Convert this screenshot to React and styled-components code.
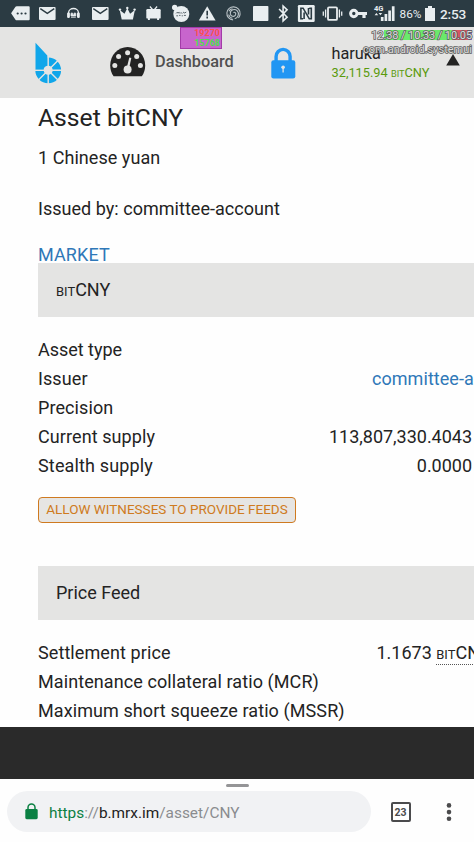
import styled, { createGlobalStyle } from 'styled-components'

const colors = {
  status: '#2b3b43',
  statusIcon: '#e9eef0',
  panel: '#e4e4e3',
  text: '#232323',
  link: '#2f78b8',
  green: '#5a9a0c',
  orange: '#cf7a20',
  secure: '#0b8043',
}

const App = () => (
  <Screen>
    <GlobalStyle />
    <StatusBar>
      {statusIcons.map(({ name, width, draw }) => (
        <StatusCell key={name} $width={width}>
          <svg width={width} height="27" viewBox={`${-width / 2} 0 ${width} 27`}>
            {draw}
          </svg>
        </StatusCell>
      ))}
      <Battery>86%</Battery>
      <svg width="10" height="27" viewBox="0 0 10 27">
        <path d="M0 8h3V6h4v2h3v13H0z" fill={colors.statusIcon} />
      </svg>
      <Clock>2:53</Clock>
    </StatusBar>

    <Header>
      <Logo />
      <Gauge />
      <NavLabel>Dashboard</NavLabel>
      <Padlock />
      <Account>
        <UserName>haruka</UserName>
        <Balance>
          32,115.94 <Small>BIT</Small>CNY
        </Balance>
      </Account>
      <Caret width="14" height="12" viewBox="0 0 14 12">
        <path d="M7 0l6.8 11.5H.2z" fill={colors.text} />
      </Caret>
      <Traffic>
        <TrafficLine $color="#ff5050">19270</TrafficLine>
        <TrafficLine $color="#4be04b">15768</TrafficLine>
      </Traffic>
      <Load>
        <LoadLine $bar>12.38 / 10.33 / 10.05</LoadLine>
        <LoadLine>com.android.systemui</LoadLine>
      </Load>
    </Header>

    <Content>
      <Title>Asset bitCNY</Title>
      <Description>1 Chinese yuan</Description>
      <IssuedBy>Issued by: committee-account</IssuedBy>
      <MarketLink>MARKET</MarketLink>
      <PanelTitle>
        <Small>BIT</Small>CNY
      </PanelTitle>
      <Table>
        <Row>
          <Label $spacing={-0.03}>Asset type</Label>
        </Row>
        <Row>
          <Label>Issuer</Label>
          <IssuerLink>committee-account</IssuerLink>
        </Row>
        <Row>
          <Label>Precision</Label>
        </Row>
        <Row>
          <Label>Current supply</Label>
          <Value>113,807,330.4043</Value>
        </Row>
        <Row>
          <Label $spacing={0.15}>Stealth supply</Label>
          <Value>0.0000</Value>
        </Row>
      </Table>
      <FeedButton>ALLOW WITNESSES TO PROVIDE FEEDS</FeedButton>
      <PanelTitle>Price Feed</PanelTitle>
      <Table>
        <Row>
          <Label>Settlement price</Label>
          <Price>
            1.1673{' '}
            <Unit>
              <Small>BIT</Small>CNY
            </Unit>
          </Price>
        </Row>
        <Row>
          <Label>Maintenance collateral ratio (MCR)</Label>
        </Row>
        <Row>
          <Label>Maximum short squeeze ratio (MSSR)</Label>
        </Row>
      </Table>
    </Content>

    <PageFooter />

    <BrowserBar>
      <Handle />
      <Toolbar>
        <Address>
          <svg width="13" height="17" viewBox="0 0 13 17">
            <path
              d="M3 7V4.6a3.5 3.5 0 0 1 7 0V7"
              fill="none"
              stroke={colors.secure}
              strokeWidth="1.5"
            />
            <rect x=".3" y="6" width="12.4" height="10.2" rx="1.4" fill={colors.secure} />
          </svg>
          <Url>
            <Scheme>https</Scheme>://<Host>b.mrx.im</Host>/asset/CNY
          </Url>
        </Address>
        <Tabs>23</Tabs>
        <svg width="6" height="20" viewBox="0 0 6 20" fill="#4b4b4d">
          <circle cx="3" cy="3.4" r="2.3" />
          <circle cx="3" cy="10.1" r="2.3" />
          <circle cx="3" cy="16.8" r="2.3" />
        </svg>
      </Toolbar>
    </BrowserBar>
  </Screen>
)

const mail = (
  <>
    <rect x="-8.3" y="7" width="16.6" height="13" rx="1" fill={colors.statusIcon} />
    <path d="M-7 8.7L0 13.4 7 8.7" fill="none" stroke={colors.status} strokeWidth="1.4" />
  </>
)

// every icon is drawn round x = 0 of its own cell
const statusIcons = [
  {
    name: 'more',
    width: 26.6,
    draw: (
      <>
        <path
          d="M-3.6 6.2H8.4a1 1 0 0 1 1 1V19.3a1 1 0 0 1-1 1H-3.6a1.5 1.5 0 0 1-1.2-.6L-9.2 13.3-4.8 6.8a1.5 1.5 0 0 1 1.2-.6z"
          fill={colors.statusIcon}
        />
        <g fill={colors.status}>
          <circle cx="-2.6" cy="13.5" r="1.1" />
          <circle cx="1.3" cy="13.5" r="1.1" />
          <circle cx="5.2" cy="13.5" r="1.1" />
        </g>
      </>
    ),
  },
  { name: 'mail', width: 26.6, draw: mail },
  {
    name: 'headset',
    width: 26.8,
    draw: (
      <>
        <path
          d="M-4.8 14V12.5a4.9 4 0 0 1 9.8 0V14"
          fill="none"
          stroke={colors.statusIcon}
          strokeWidth="1.3"
        />
        <rect x="-6.3" y="12.5" width="2.8" height="5.5" rx="1.2" fill={colors.statusIcon} />
        <rect x="3.6" y="12.5" width="2.8" height="5.5" rx="1.2" fill={colors.statusIcon} />
        <path
          d="M-2.4 16v-2.2a.9.9 0 0 1 1.8 0v1.2h1.2v-1.2a.9.9 0 0 1 1.8 0V16zM-2.4 17.3h4.8"
          fill={colors.statusIcon}
          stroke={colors.statusIcon}
          strokeWidth=".8"
        />
      </>
    ),
  },
  { name: 'mail-2', width: 26.6, draw: mail },
  {
    name: 'crown',
    width: 26.6,
    draw: (
      <g fill={colors.statusIcon}>
        <path d="M-5.6 19.6L-7.6 10l4.8 3.8L0 8.2l2.8 5.6L7.6 10l-2 9.6z" />
        <circle cx="-7.3" cy="9.6" r="1.2" />
        <circle cx="0" cy="8" r="1.2" />
        <circle cx="7.3" cy="9.6" r="1.2" />
      </g>
    ),
  },
  {
    name: 'tv',
    width: 27,
    draw: (
      <>
        <path d="M-3.6 6.5l2.6 3M3.6 6.5l-2.6 3" stroke={colors.statusIcon} strokeWidth="1.2" />
        <rect x="-7.2" y="9" width="14.4" height="9.6" rx="1.2" fill={colors.statusIcon} />
        <path d="M-4.6 18v2M4.6 18v2" stroke={colors.statusIcon} strokeWidth="2" />
      </>
    ),
  },
  {
    name: 'bubble',
    width: 26.6,
    draw: (
      <>
        <circle cx="1" cy="14" r="8" fill={colors.statusIcon} />
        <circle cx="-5.6" cy="7.4" r="2.7" fill={colors.statusIcon} />
        <path
          d="M-4.2 13.4l1.2-1.2.6 1 1.2-1 .6 1.2M.8 12.2v1.4M2.4 13.4l1-1.2 1 .8 1.6-1M-4 15.8h1.8M-1.2 15.4h1.4M1.4 15.8h1.2M3.6 15.4h2"
          fill="none"
          stroke="#58646a"
          strokeWidth="1"
        />
      </>
    ),
  },
  {
    name: 'warning',
    width: 26.4,
    draw: (
      <>
        <path d="M0 6.2L8.4 20.5H-8.4z" fill={colors.statusIcon} />
        <path d="M0 10.8v4.6M0 16.6v1.8" stroke={colors.status} strokeWidth="1.6" />
      </>
    ),
  },
  {
    name: 'spiral',
    width: 27,
    draw: (
      <g fill="none" stroke="#b9c2c6" strokeWidth="1.1">
        <path d="M0 12.8c1-1.4 3 .2 2 2.2-1.2 2.2-5 1.6-5.2-1.5C-3.4 9.7 1.2 8.3 3.6 10.7c2.6 2.6 1.2 7.1-2.4 8.1" />
        <path d="M-.4 19.9c-3.8-.2-6.6-3.6-6.2-7.2.4-3.4 3.4-6 6.8-5.8 4 .2 6.8 3.4 6.4 7.2-.1 1.4-.7 2.7-1.6 3.8" />
        <path d="M-4.8 14.5c.4 2 1.8 3.4 3.7 3.8M-4.6 11.3C-3.9 9.7-2.5 8.8-1 8.7" />
      </g>
    ),
  },
  {
    name: 'square',
    width: 26,
    draw: <rect x="-7" y="6" width="15.4" height="15" rx=".8" fill={colors.statusIcon} />,
  },
  {
    name: 'bluetooth',
    width: 19,
    draw: (
      <path
        d="M-3.4 9l8 8.2-4 3.8V6l4 3.8-8 8.2"
        fill="none"
        stroke={colors.statusIcon}
        strokeWidth="1.6"
      />
    ),
  },
  {
    name: 'nfc',
    width: 27,
    draw: (
      <>
        <rect x="-7.6" y="5" width="16.8" height="17" rx="1.2" fill={colors.statusIcon} />
        <path
          d="M-2.4 18.8h-2.2V8.2h2.2L3.8 18.8h2V8.2H3.8M-1.4 12.5v6.6M3 14.5V8"
          fill="none"
          stroke={colors.status}
          strokeWidth="1.6"
        />
      </>
    ),
  },
  {
    name: 'vibrate',
    width: 27,
    draw: (
      <g fill="none" stroke={colors.statusIcon}>
        <rect x="-4.5" y="7.3" width="9" height="12.6" rx="1" strokeWidth="1.8" />
        <path d="M-6.9 9.5v8M6.9 9.5v8M-9.2 11.4v4.4M9.2 11.4v4.4" strokeWidth="1.3" />
      </g>
    ),
  },
  {
    name: 'key',
    width: 24,
    draw: (
      <g fill="none" stroke={colors.statusIcon}>
        <circle cx="-4.2" cy="13.5" r="3.2" strokeWidth="3" />
        <path d="M0 13.5h9M6 14v4" strokeWidth="3.2" />
      </g>
    ),
  },
  {
    name: 'signal',
    width: 28,
    draw: (
      <>
        <text
          x="-10"
          y="10.6"
          fontFamily="Roboto, sans-serif"
          fontSize="7.5"
          fontWeight="700"
          fill={colors.statusIcon}
        >
          4G
        </text>
        <path
          d="M-9.4 15.2l1.8-2.2 1.8 2.2zM-5.4 13l1.8 2.2 1.8-2.2z"
          fill={colors.statusIcon}
        />
        <path
          d="M-1.8 21v-4M1.9 21v-7M5.6 21V10.4M9.2 21V6.2"
          stroke={colors.statusIcon}
          strokeWidth="2.7"
        />
      </>
    ),
  },
]

const GlobalStyle = createGlobalStyle`
  body {
    margin: 0;
    background: #fff;
  }
`

const Screen = styled.div`
  width: 474px;
  height: 842px;
  display: flex;
  flex-direction: column;
  overflow: hidden;
  background: #fefefe;
  color: ${colors.text};
  font-family: Roboto, 'Liberation Sans', sans-serif;
`

const StatusBar = styled.div`
  flex: none;
  display: flex;
  height: 27px;
  padding-left: 7px;
  background: ${colors.status};
  color: ${colors.statusIcon};
  line-height: 28px;
`

const StatusCell = styled.div`
  flex: none;
  width: ${({ $width }) => $width}px;
`

const Battery = styled.div`
  width: 25px;
  flex: none;
  margin-left: 1.4px;
  font-size: 11.8px;
`

const Clock = styled.div`
  margin-left: 5.5px;
  font-size: 13.6px;
  font-weight: 500;
  letter-spacing: -0.2px;
  white-space: nowrap;
`

const Header = styled.header`
  position: relative;
  flex: none;
  display: flex;
  align-items: flex-start;
  height: 71px;
  padding-left: 34px;
  background: ${colors.panel};
`

const Logo = () => (
  <svg width="76" height="71" viewBox="34 27 76 71">
    <circle cx="48.2" cy="70.3" r="8.7" fill="none" stroke="#10a6ea" strokeWidth="8.4" />
    <path
      d="M48.2 70.3V56M48.2 70.3V85M48.2 70.3H34M48.2 70.3H63M48.2 70.3l10-10M48.2 70.3l10 10M48.2 70.3l-10 10"
      stroke={colors.panel}
      strokeWidth="1.4"
    />
    <path d="M34 55h13.5v14.6H34z" fill={colors.panel} />
    <path d="M35.5 42.8l11.8 12.6v10.4a4.6 4.6 0 0 0-3.7 3.7H35.5z" fill="#10a6ea" />
  </svg>
)

const Gauge = () => (
  <svg width="45" height="71" viewBox="110 27 45 71">
    <path
      d="M113.6 76.2c-2.2-3-3.4-6.6-3.4-10.8 0-10 7.6-18.3 17.4-18.3s17.6 8.3 17.6 18.3c0 4.2-1.2 7.8-3.4 10.8z"
      fill={colors.text}
    />
    <g fill={colors.panel}>
      <circle cx="114.8" cy="65.6" r="2.5" />
      <circle cx="118.6" cy="56.6" r="2.5" />
      <circle cx="127.6" cy="52.7" r="2.5" />
      <circle cx="136.7" cy="56.6" r="2.5" />
      <circle cx="140.4" cy="65.6" r="2.5" />
      <circle cx="127.6" cy="69.4" r="4" />
      <path d="M129.3 57.6l2 .5-2.3 11-2.4-.6z" />
    </g>
  </svg>
)

const NavLabel = styled.div`
  width: 115.5px;
  padding-top: 24px;
  flex: none;
  color: #505050;
  font-size: 16.3px;
  font-weight: 500;
  line-height: 22px;
`

const Padlock = () => (
  <svg width="61" height="71" viewBox="270.5 27 61 71">
    <path
      d="M275.6 62v-5.6a7 7 0 0 1 14 0V62"
      fill="none"
      stroke="#2196f3"
      strokeWidth="3.4"
    />
    <rect x="270.8" y="60.2" width="24" height="18.2" rx="2.2" fill="#2196f3" />
    <circle cx="282.6" cy="67.3" r="1.8" fill={colors.panel} />
    <path d="M282.6 68v4.4" stroke={colors.panel} strokeWidth="1.3" />
  </svg>
)

const Account = styled.div`
  width: 114.5px;
  padding-top: 16px;
  white-space: nowrap;
`

const UserName = styled.div`
  font-size: 16.3px;
  line-height: 21px;
`

const Small = styled.span`
  font-size: 0.72em;
`

const Balance = styled.div`
  color: ${colors.green};
  font-size: 12.8px;
  line-height: 18px;
`

const Caret = styled.svg`
  margin-top: 27px;
`

// debug overlays of the system sit on top of the page header
const Traffic = styled.div`
  position: absolute;
  left: 180px;
  top: 0;
  box-sizing: border-box;
  width: 42px;
  height: 22px;
  padding-right: 1px;
  border: 1px solid #a33ba8;
  background: #c865cd;
`

const TrafficLine = styled.div`
  color: ${({ $color }) => $color};
  font-size: 9px;
  font-weight: 700;
  line-height: 10px;
  text-align: right;
`

const Load = styled.div`
  position: absolute;
  top: 1px;
  right: 2px;
  display: flex;
  flex-direction: column;
  align-items: flex-end;
`

const LoadLine = styled.div`
  height: 13.5px;
  color: #dedede;
  font-size: 11px;
  line-height: 15px;
  white-space: nowrap;
  -webkit-text-stroke: 1.5px #5c5c5c;
  paint-order: stroke fill;
  ${({ $bar }) =>
    $bar &&
    `letter-spacing: -0.1px;
    background: linear-gradient(90deg, transparent 13px, #6be96b 13px, #6be96b 81px, #dc5561 81px, #dc5561 97px, #8a73c0 97px) 0 2px / 100% 10px no-repeat;`}
`

const Content = styled.main`
  flex: none;
  height: 629px;
  padding-left: 38px;
  overflow: hidden;
  font-size: 18px;
  line-height: 29px;
  white-space: nowrap;
`

const Title = styled.h1`
  margin: 4px 0 0;
  font-size: 24.7px;
  font-weight: 400;
  line-height: 32px;
`

const Description = styled.div`
  margin-top: 9px;
  letter-spacing: 0.05px;
`

const IssuedBy = styled.div`
  margin-top: 22px;
  letter-spacing: 0.03px;
`

const MarketLink = styled.div`
  height: 23px;
  margin-top: 17px;
  color: ${colors.link};
  letter-spacing: 0.1px;
`

const PanelTitle = styled.div`
  height: 53.5px;
  padding-left: 18px;
  background: ${colors.panel};
  line-height: 54px;
`

const Table = styled.div`
  display: flex;
  flex-direction: column;
  padding-top: 18px;
`

const Row = styled.div`
  display: flex;
  justify-content: space-between;
  height: 29.1px;
  padding-right: 2px;
`

const Label = styled.span`
  letter-spacing: ${({ $spacing = 0.09 }) => $spacing}px;
`

const Value = styled.span`
  letter-spacing: -0.02px;
`

const IssuerLink = styled.span`
  width: 100px;
  color: ${colors.link};
  letter-spacing: 0.05px;
`

const Price = styled.span`
  width: 95.5px;
`

const Unit = styled.span`
  padding-bottom: 1px;
  border-bottom: 1px dotted #555;
`

const FeedButton = styled.button`
  display: block;
  box-sizing: border-box;
  width: 258px;
  height: 26px;
  margin: 17px 0 43.3px;
  padding: 0;
  border: 1.4px solid ${colors.orange};
  border-radius: 4px;
  background: #e6e5e3;
  color: ${colors.orange};
  font-family: inherit;
  font-size: 13.5px;
  line-height: 23px;
`

const PageFooter = styled.div`
  flex: none;
  height: 52px;
  background: #2a2a2a;
`

const BrowserBar = styled.div`
  flex: 1;
  background: #fefefe;
`

const Handle = styled.div`
  width: 23px;
  height: 3px;
  margin: 5px auto 4px;
  border-radius: 2px;
  background: #949496;
`

const Toolbar = styled.div`
  display: flex;
  align-items: center;
  padding-left: 7px;
`

const Address = styled.div`
  display: flex;
  align-items: center;
  gap: 11px;
  box-sizing: border-box;
  width: 364px;
  height: 41px;
  padding-left: 18px;
  border-radius: 21px;
  background: #f1f2f4;
`

const Url = styled.div`
  padding-top: 2px;
  color: #8a8c8f;
  font-size: 15.4px;
  white-space: nowrap;
`

const Scheme = styled.span`
  color: ${colors.secure};
`

const Host = styled.span`
  color: #222;
`

const Tabs = styled.div`
  box-sizing: border-box;
  width: 20px;
  height: 20px;
  margin: 1px 35px 0 19.5px;
  border: 2px solid #4b4b4d;
  border-radius: 2px;
  color: #4b4b4d;
  font-size: 10.5px;
  font-weight: 700;
  line-height: 17px;
  text-align: center;
`

export default App
